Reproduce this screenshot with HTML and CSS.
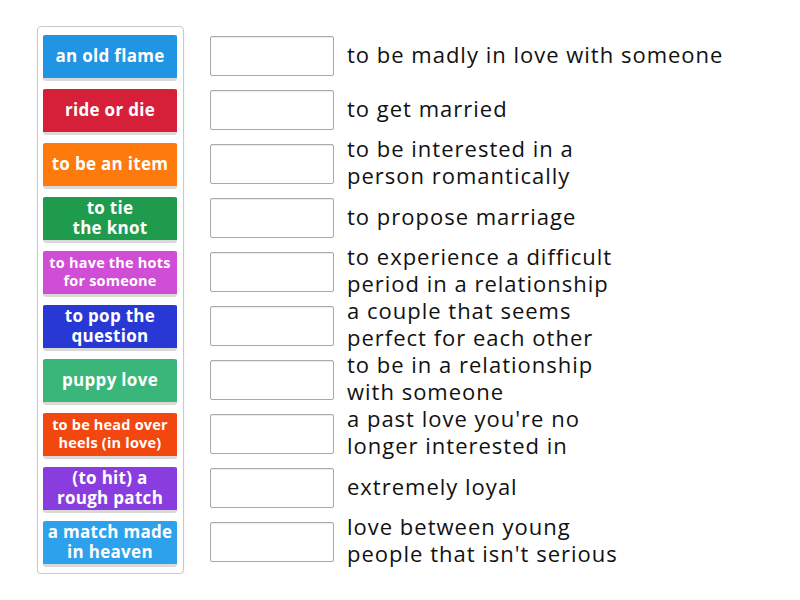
FILE: index.html
```html
<!DOCTYPE html>
<html lang="en">
<head>
  <meta charset="UTF-8" />
  <title>Love idioms - match up</title>
  <link rel="stylesheet" href="styles.css">
</head>
<body>
  <div class="game">
    <div class="tile-bank">
      <div class="tile c-blue">an old flame</div>
      <div class="tile c-red">ride or die</div>
      <div class="tile c-orange">to be an item</div>
      <div class="tile c-green">to tie<br>the knot</div>
      <div class="tile c-pink small">to have the hots<br>for someone</div>
      <div class="tile c-indigo">to pop the<br>question</div>
      <div class="tile c-mint">puppy love</div>
      <div class="tile c-flame small">to be head over<br>heels (in love)</div>
      <div class="tile c-purple">(to hit) a<br>rough patch</div>
      <div class="tile c-sky">a match made<br>in heaven</div>
    </div>

    <div class="answers">
      <div class="row"><div class="slot"></div><div class="def">to be madly in love with someone</div></div>
      <div class="row"><div class="slot"></div><div class="def">to get married</div></div>
      <div class="row"><div class="slot"></div><div class="def">to be interested in a<br>person romantically</div></div>
      <div class="row"><div class="slot"></div><div class="def">to propose marriage</div></div>
      <div class="row"><div class="slot"></div><div class="def">to experience a difficult<br>period in a relationship</div></div>
      <div class="row"><div class="slot"></div><div class="def">a couple that seems<br>perfect for each other</div></div>
      <div class="row"><div class="slot"></div><div class="def">to be in a relationship<br>with someone</div></div>
      <div class="row"><div class="slot"></div><div class="def">a past love you're no<br>longer interested in</div></div>
      <div class="row"><div class="slot"></div><div class="def">extremely loyal</div></div>
      <div class="row"><div class="slot"></div><div class="def">love between young<br>people that isn't serious</div></div>
    </div>
  </div>
</body>
</html>
```

FILE: styles.css
```css
body {
  font-family: "Open Sans", "Noto Sans", sans-serif;
  background: #fff;
  margin: 0;
  padding: 26px 0 0 37px;
}

.game {
  display: flex;
  align-items: flex-start;
  gap: 26px;
}

/* left column of draggable tiles */
.tile-bank {
  width: 134px;
  padding: 6px 6px 6px 5px;
  border: 1px solid #c9c9c9;
  border-radius: 4px;
  display: flex;
  flex-direction: column;
  gap: 6px;
  box-shadow: 0 1px 2px rgba(0,0,0,0.08);
}

.tile {
  height: 48px;
  box-sizing: border-box;
  padding: 0 2px 2px;
  border-radius: 3px;
  color: #fff;
  font-weight: 700;
  font-size: 17px;
  line-height: 20px;
  letter-spacing: 0.3px;
  text-align: center;
  white-space: nowrap;
  display: flex;
  align-items: center;
  justify-content: center;
  border-top: 2px solid rgba(255,255,255,0.25);
  border-bottom: 3px solid rgba(0,0,0,0.15);
  background-clip: padding-box;
}

.tile.small {
  font-size: 14.5px;
  line-height: 18px;
  letter-spacing: 0.2px;
}

.c-blue   { background-color: #1f95e4; }
.c-red    { background-color: #d6203a; }
.c-orange { background-color: #ff7a0c; }
.c-green  { background-color: #1f9b4d; }
.c-pink   { background-color: #d04dd6; }
.c-indigo { background-color: #2838d4; }
.c-mint   { background-color: #3bb67a; }
.c-flame  { background-color: #f2480f; }
.c-purple { background-color: #8a3ddf; }
.c-sky    { background-color: #2da1ec; }

/* right column: empty drop slots with definitions */
.answers {
  display: flex;
  flex-direction: column;
  padding-top: 3px;
}

.row {
  height: 54px;
  display: flex;
  align-items: center;
  gap: 13px;
}

.slot {
  width: 122px;
  height: 38px;
  border: 1px solid #aaa;
  border-radius: 2px;
  box-shadow: inset 0 1px 1px rgba(0,0,0,0.08);
  flex: none;
}

.def {
  font-size: 22px;
  line-height: 27px;
  letter-spacing: 1px;
  color: #111;
  margin-top: -4px;
}
```
